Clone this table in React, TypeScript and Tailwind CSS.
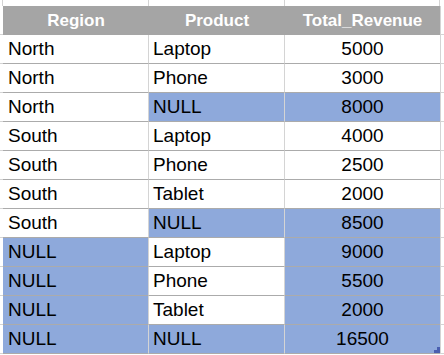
const rows: [string, string, string, boolean[]][] = [
  ["North", "Laptop", "5000", [false, false, false]],
  ["North", "Phone", "3000", [false, false, false]],
  ["North", "NULL", "8000", [false, true, true]],
  ["South", "Laptop", "4000", [false, false, false]],
  ["South", "Phone", "2500", [false, false, false]],
  ["South", "Tablet", "2000", [false, false, false]],
  ["South", "NULL", "8500", [false, true, true]],
  ["NULL", "Laptop", "9000", [true, false, true]],
  ["NULL", "Phone", "5500", [true, false, true]],
  ["NULL", "Tablet", "2000", [true, false, true]],
  ["NULL", "NULL", "16500", [true, true, true]],
];

const App = () => {
  return (
    <div
      className="relative w-[444px] h-[355px] bg-white overflow-hidden"
      style={{ fontFamily: '"Liberation Sans", Arial, sans-serif' }}
    >
      {/* strip above the header */}
      <div className="flex h-[6px]">
        <div className="w-[3px] border-r border-[#d4d4d4]" />
        <div className="w-[146px] border-r border-[#d4d4d4]" />
        <div className="w-[136px] border-r border-[#d4d4d4]" />
        <div className="w-[155px] border-r border-[#d4d4d4]" />
      </div>

      {/* header */}
      <div className="flex h-[29px]">
        <div className="w-[3px] border-b border-[#d4d4d4]" />
        <div className="flex w-[437px] bg-[#a5a5a5] text-white font-bold text-[17px]">
          <div className="w-[146px] flex items-center justify-center">Region</div>
          <div className="w-[136px] flex items-center justify-center">Product</div>
          <div className="w-[155px] flex items-center justify-center">Total_Revenue</div>
        </div>
        <div className="w-[4px] border-l border-b border-[#d4d4d4]" />
      </div>

      {rows.map(([region, product, revenue, hl], i) => (
        <div key={i} className="flex h-[29px] text-[19px] text-black">
          <div className="w-[3px] border-b border-[#d4d4d4]" />
          <div
            className={`w-[146px] flex items-center pl-[5px] pt-[1px] border-b border-r border-b-[#ababab] border-r-[#d4d4d4] ${
              hl[0] ? "bg-[#8ea9db]" : "bg-white"
            }`}
          >
            {region}
          </div>
          <div
            className={`w-[136px] flex items-center pl-[4px] pt-[1px] border-b border-r border-b-[#ababab] border-r-[#d4d4d4] ${
              hl[1] ? "bg-[#8ea9db]" : "bg-white"
            }`}
          >
            {product}
          </div>
          <div
            className={`w-[155px] flex items-center justify-center pt-[1px] border-b border-b-[#ababab] ${
              hl[2] ? "bg-[#8ea9db]" : "bg-white"
            }`}
          >
            {revenue}
          </div>
          <div className="w-[4px] border-l border-b border-[#d4d4d4]" />
        </div>
      ))}

      {/* table resize handle */}
      <div className="absolute left-[437px] top-[347px] w-[3px] h-[6px] bg-[#4a5fb0]" />
      <div className="absolute left-[434px] top-[350px] w-[6px] h-[3px] bg-[#4a5fb0]" />
    </div>
  );
};

export default App;
